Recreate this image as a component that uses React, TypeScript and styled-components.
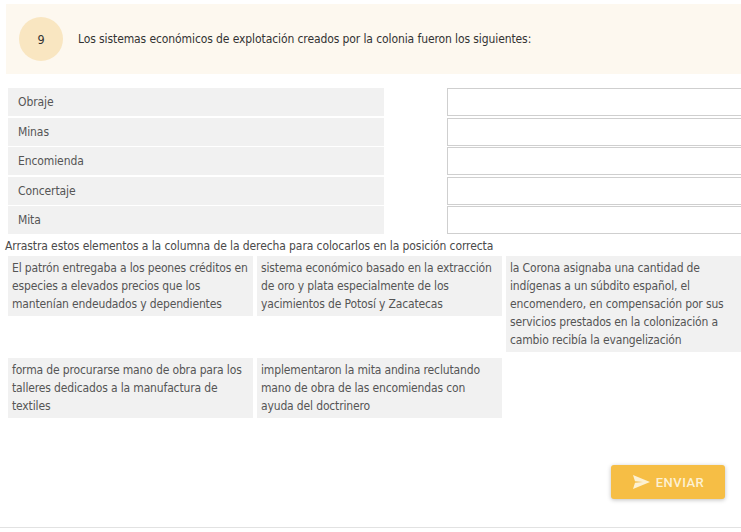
import React from "react";
import styled, { createGlobalStyle } from "styled-components";

const GlobalStyle = createGlobalStyle`
  html, body {
    margin: 0;
    padding: 0;
    background: #ffffff;
  }
  body {
    font-family: "Liberation Sans Narrow", "DejaVu Sans Condensed", Roboto, sans-serif;
    letter-spacing: -0.1px;
    overflow: hidden;
  }
`;

const Page = styled.div`
  width: 741px;
  height: 532px;
  overflow: hidden;
  display: flex;
  flex-direction: column;
`;

const QuestionBar = styled.div`
  margin: 4px 0 0 6px;
  height: 70px;
  background: #fdf8ef;
  display: flex;
  align-items: center;
  padding-left: 13px;
  gap: 15px;
`;

const Badge = styled.div`
  width: 44px;
  height: 44px;
  border-radius: 50%;
  background: #f9e6c1;
  display: flex;
  align-items: center;
  justify-content: center;
  font-size: 12.5px;
  color: #333;
`;

const Question = styled.div`
  font-size: 12px;
  color: #333;
`;

const MatchArea = styled.div`
  margin: 14px 0 0 8px;
  display: grid;
  grid-template-columns: 376px 376px;
  column-gap: 63px;
`;

const Column = styled.div`
  display: flex;
  flex-direction: column;
  gap: 1.5px;
`;

const Term = styled.div`
  height: 28px;
  background: #f1f1f1;
  color: #555;
  font-size: 12px;
  display: flex;
  align-items: center;
  padding-left: 10px;
`;

const Slot = styled.div`
  height: 28px;
  box-sizing: border-box;
  border: 1px solid #cfcfcf;
  background: #fff;
`;

const Hint = styled.div`
  margin: 4px 0 0 5px;
  font-size: 12px;
  line-height: 16px;
  color: #4a4a4a;
`;

const Cards = styled.div`
  margin: 2px 0 0 8px;
  display: grid;
  grid-template-columns: repeat(3, 245px);
  column-gap: 4px;
  row-gap: 6px;
  align-items: start;
`;

const Card = styled.div`
  background: #f1f1f1;
  color: #555;
  font-size: 12px;
  line-height: 18px;
  letter-spacing: -0.15px;
  padding: 3px 3.5px 3px 4px;
`;

const Footer = styled.div`
  margin-top: auto;
  display: flex;
  justify-content: flex-end;
  padding: 0 16px 28px 0;
  border-bottom: 1px solid #e2e2e2;
  margin-bottom: 4px;
`;

const SendButton = styled.button`
  width: 114px;
  height: 34px;
  border: none;
  border-radius: 3px;
  background: #f6be45;
  color: #fdf1d2;
  font-family: Roboto, sans-serif;
  font-weight: 500;
  font-size: 13px;
  letter-spacing: 0.5px;
  display: flex;
  align-items: center;
  justify-content: center;
  gap: 6px;
  box-shadow: 0 1px 4px rgba(0, 0, 0, 0.25);
`;

const terms = ["Obraje", "Minas", "Encomienda", "Concertaje", "Mita"];

const definitions = [
  "El patrón entregaba a los peones créditos en especies a elevados precios que los mantenían endeudados y dependientes",
  "sistema económico basado en la extracción de oro y plata especialmente de los yacimientos de Potosí y Zacatecas",
  "la Corona asignaba una cantidad de indígenas a un súbdito español, el encomendero, en compensación por sus servicios prestados en la colonización a cambio recibía la evangelización",
  "forma de procurarse mano de obra para los talleres dedicados a la manufactura de textiles",
  "implementaron la mita andina reclutando mano de obra de las encomiendas con ayuda del doctrinero",
];

const SendIcon = () => (
  <svg width="18" height="14" viewBox="0 0 18 14">
    <path d="M1 0 L18 7 L1 14 L3 7.8 L11 7 L3 6.2 Z" fill="#fdf1d2" />
  </svg>
);

export default function App() {
  return (
    <Page>
      <GlobalStyle />
      <QuestionBar>
        <Badge>9</Badge>
        <Question>
          Los sistemas económicos de explotación creados por la colonia fueron los siguientes:
        </Question>
      </QuestionBar>
      <MatchArea>
        <Column>
          {terms.map(t => (
            <Term key={t}>{t}</Term>
          ))}
        </Column>
        <Column>
          {terms.map(t => (
            <Slot key={t} />
          ))}
        </Column>
      </MatchArea>
      <Hint>
        Arrastra estos elementos a la columna de la derecha para colocarlos en la posición correcta
      </Hint>
      <Cards>
        {definitions.map(d => (
          <Card key={d}>{d}</Card>
        ))}
      </Cards>
      <Footer>
        <SendButton>
          <SendIcon />
          ENVIAR
        </SendButton>
      </Footer>
    </Page>
  );
}
